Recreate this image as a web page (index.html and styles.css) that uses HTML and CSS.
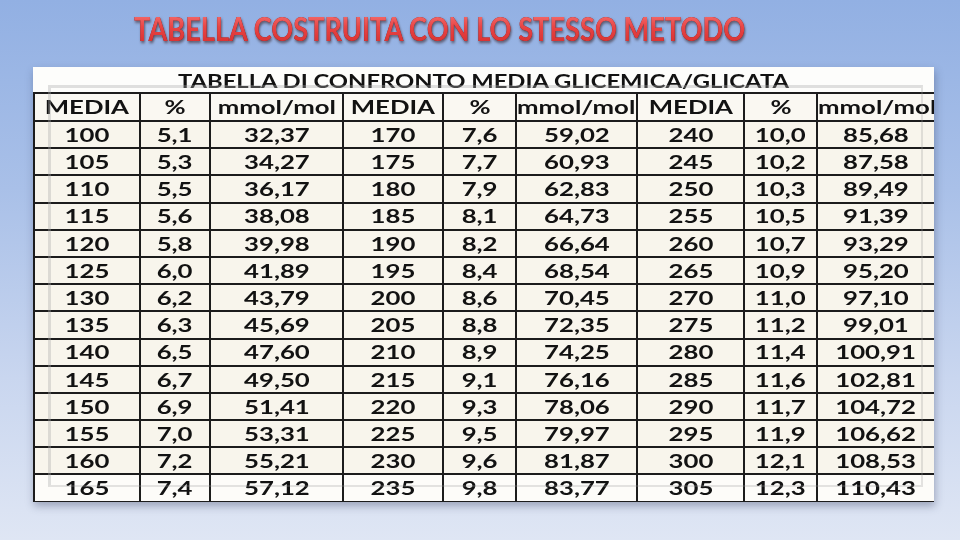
FILE: index.html
```html
<!DOCTYPE html>
<html lang="it">
<head>
<meta charset="utf-8">
<title>Tabella</title>
<link rel="stylesheet" href="styles.css">
</head>
<body>
<div class="slide">
  <h1 class="heading"><span class="heading-text">TABELLA COSTRUITA CON LO STESSO METODO</span></h1>
  <div class="table-wrap">
    <div class="grid">
      <div class="cell title"><span class="t">TABELLA DI CONFRONTO MEDIA GLICEMICA/GLICATA</span></div>
      <div class="cell head"><span class="t">MEDIA</span></div><div class="cell head"><span class="t">%</span></div><div class="cell head"><span class="t">mmol/mol</span></div>
      <div class="cell head"><span class="t">MEDIA</span></div><div class="cell head"><span class="t">%</span></div><div class="cell head left"><span class="t tl">mmol/mol</span></div>
      <div class="cell head"><span class="t">MEDIA</span></div><div class="cell head"><span class="t">%</span></div><div class="cell head left"><span class="t tl">mmol/mol</span></div>

      <div class="cell"><span class="t">100</span></div><div class="cell"><span class="t">5,1</span></div><div class="cell"><span class="t">32,37</span></div><div class="cell"><span class="t">170</span></div><div class="cell"><span class="t">7,6</span></div><div class="cell"><span class="t">59,02</span></div><div class="cell"><span class="t">240</span></div><div class="cell"><span class="t">10,0</span></div><div class="cell"><span class="t">85,68</span></div>
      <div class="cell"><span class="t">105</span></div><div class="cell"><span class="t">5,3</span></div><div class="cell"><span class="t">34,27</span></div><div class="cell"><span class="t">175</span></div><div class="cell"><span class="t">7,7</span></div><div class="cell"><span class="t">60,93</span></div><div class="cell"><span class="t">245</span></div><div class="cell"><span class="t">10,2</span></div><div class="cell"><span class="t">87,58</span></div>
      <div class="cell"><span class="t">110</span></div><div class="cell"><span class="t">5,5</span></div><div class="cell"><span class="t">36,17</span></div><div class="cell"><span class="t">180</span></div><div class="cell"><span class="t">7,9</span></div><div class="cell"><span class="t">62,83</span></div><div class="cell"><span class="t">250</span></div><div class="cell"><span class="t">10,3</span></div><div class="cell"><span class="t">89,49</span></div>
      <div class="cell"><span class="t">115</span></div><div class="cell"><span class="t">5,6</span></div><div class="cell"><span class="t">38,08</span></div><div class="cell"><span class="t">185</span></div><div class="cell"><span class="t">8,1</span></div><div class="cell"><span class="t">64,73</span></div><div class="cell"><span class="t">255</span></div><div class="cell"><span class="t">10,5</span></div><div class="cell"><span class="t">91,39</span></div>
      <div class="cell"><span class="t">120</span></div><div class="cell"><span class="t">5,8</span></div><div class="cell"><span class="t">39,98</span></div><div class="cell"><span class="t">190</span></div><div class="cell"><span class="t">8,2</span></div><div class="cell"><span class="t">66,64</span></div><div class="cell"><span class="t">260</span></div><div class="cell"><span class="t">10,7</span></div><div class="cell"><span class="t">93,29</span></div>
      <div class="cell"><span class="t">125</span></div><div class="cell"><span class="t">6,0</span></div><div class="cell"><span class="t">41,89</span></div><div class="cell"><span class="t">195</span></div><div class="cell"><span class="t">8,4</span></div><div class="cell"><span class="t">68,54</span></div><div class="cell"><span class="t">265</span></div><div class="cell"><span class="t">10,9</span></div><div class="cell"><span class="t">95,20</span></div>
      <div class="cell"><span class="t">130</span></div><div class="cell"><span class="t">6,2</span></div><div class="cell"><span class="t">43,79</span></div><div class="cell"><span class="t">200</span></div><div class="cell"><span class="t">8,6</span></div><div class="cell"><span class="t">70,45</span></div><div class="cell"><span class="t">270</span></div><div class="cell"><span class="t">11,0</span></div><div class="cell"><span class="t">97,10</span></div>
      <div class="cell"><span class="t">135</span></div><div class="cell"><span class="t">6,3</span></div><div class="cell"><span class="t">45,69</span></div><div class="cell"><span class="t">205</span></div><div class="cell"><span class="t">8,8</span></div><div class="cell"><span class="t">72,35</span></div><div class="cell"><span class="t">275</span></div><div class="cell"><span class="t">11,2</span></div><div class="cell"><span class="t">99,01</span></div>
      <div class="cell"><span class="t">140</span></div><div class="cell"><span class="t">6,5</span></div><div class="cell"><span class="t">47,60</span></div><div class="cell"><span class="t">210</span></div><div class="cell"><span class="t">8,9</span></div><div class="cell"><span class="t">74,25</span></div><div class="cell"><span class="t">280</span></div><div class="cell"><span class="t">11,4</span></div><div class="cell"><span class="t">100,91</span></div>
      <div class="cell"><span class="t">145</span></div><div class="cell"><span class="t">6,7</span></div><div class="cell"><span class="t">49,50</span></div><div class="cell"><span class="t">215</span></div><div class="cell"><span class="t">9,1</span></div><div class="cell"><span class="t">76,16</span></div><div class="cell"><span class="t">285</span></div><div class="cell"><span class="t">11,6</span></div><div class="cell"><span class="t">102,81</span></div>
      <div class="cell"><span class="t">150</span></div><div class="cell"><span class="t">6,9</span></div><div class="cell"><span class="t">51,41</span></div><div class="cell"><span class="t">220</span></div><div class="cell"><span class="t">9,3</span></div><div class="cell"><span class="t">78,06</span></div><div class="cell"><span class="t">290</span></div><div class="cell"><span class="t">11,7</span></div><div class="cell"><span class="t">104,72</span></div>
      <div class="cell"><span class="t">155</span></div><div class="cell"><span class="t">7,0</span></div><div class="cell"><span class="t">53,31</span></div><div class="cell"><span class="t">225</span></div><div class="cell"><span class="t">9,5</span></div><div class="cell"><span class="t">79,97</span></div><div class="cell"><span class="t">295</span></div><div class="cell"><span class="t">11,9</span></div><div class="cell"><span class="t">106,62</span></div>
      <div class="cell"><span class="t">160</span></div><div class="cell"><span class="t">7,2</span></div><div class="cell"><span class="t">55,21</span></div><div class="cell"><span class="t">230</span></div><div class="cell"><span class="t">9,6</span></div><div class="cell"><span class="t">81,87</span></div><div class="cell"><span class="t">300</span></div><div class="cell"><span class="t">12,1</span></div><div class="cell"><span class="t">108,53</span></div>
      <div class="cell last"><span class="t">165</span></div><div class="cell last"><span class="t">7,4</span></div><div class="cell last"><span class="t">57,12</span></div><div class="cell last"><span class="t">235</span></div><div class="cell last"><span class="t">9,8</span></div><div class="cell last"><span class="t">83,77</span></div><div class="cell last"><span class="t">305</span></div><div class="cell last"><span class="t">12,3</span></div><div class="cell last"><span class="t">110,43</span></div>
    </div>
    <div class="bevel"></div>
  </div>
</div>
</body>
</html>
```
FILE: styles.css
```css
html, body {
  margin: 0;
  padding: 0;
}
body {
  width: 960px;
  height: 540px;
  overflow: hidden;
  background: linear-gradient(180deg, #92b0e3 0%, #a9c0e8 35%, #c9d6ef 70%, #dfe6f4 100%);
  font-family: Lato, "Open Sans", sans-serif;
}
.slide {
  display: flex;
  flex-direction: column;
  padding-top: 10px;
}
.heading {
  margin: 0 0 0 134px;
  font-size: 32px;
  line-height: 38px;
  font-weight: 700;
  height: 38px;
}
.heading-text {
  display: inline-block;
  transform: scaleX(0.85);
  transform-origin: left center;
  background: linear-gradient(180deg, #f77a7a 0%, #e84444 45%, #d42c2c 100%);
  -webkit-background-clip: text;
  background-clip: text;
  color: transparent;
  filter: drop-shadow(0 0 0.6px rgba(120, 20, 20, 0.9)) drop-shadow(1px 2px 1.5px rgba(50, 25, 25, 0.6));
  white-space: nowrap;
}
.table-wrap {
  position: relative;
  margin: 19px 0 0 33px;
  width: 901px;
  box-shadow: 1px 4px 8px rgba(40, 50, 80, 0.35);
}
.grid {
  display: grid;
  grid-template-columns: 104px 68px 131px 98px 71px 119px 105px 71px 116px;
  grid-template-rows: 23px 26px repeat(14, 25.2px);
  gap: 2px;
  padding: 2px 0 1px 2px;
  background: #1c1c1c;
  color: #121212;
  font-weight: 700;
  font-size: 19.5px;
}
.cell {
  background: #f8f5ec;
  display: flex;
  align-items: center;
  justify-content: center;
  overflow: hidden;
  white-space: nowrap;
}
.cell.title {
  grid-column: 1 / -1;
  background: #fdfdfb;
  font-size: 19.5px;
  margin: -2px 0 0 -2px;
  padding-top: 3px;
}
.cell.head {
  background: #faf8f2;
}
.cell.left {
  justify-content: flex-start;
}
.cell.last {
  background: #fdfcf9;
}
.t {
  display: inline-block;
  transform: scaleX(1.32);
  line-height: 1;
}
.cell.title .t {
  transform: scaleX(1.22);
}
.t.tl {
  transform-origin: left center;
}
.bevel {
  position: absolute;
  left: 15px;
  top: 18px;
  width: 870px;
  height: 397px;
  border-top: 3px solid rgba(170, 170, 170, 0.35);
  border-left: 3px solid rgba(170, 170, 170, 0.35);
  border-right: 2px solid rgba(150, 150, 150, 0.25);
  border-bottom: 2px solid rgba(150, 150, 150, 0.25);
  pointer-events: none;
}
```
